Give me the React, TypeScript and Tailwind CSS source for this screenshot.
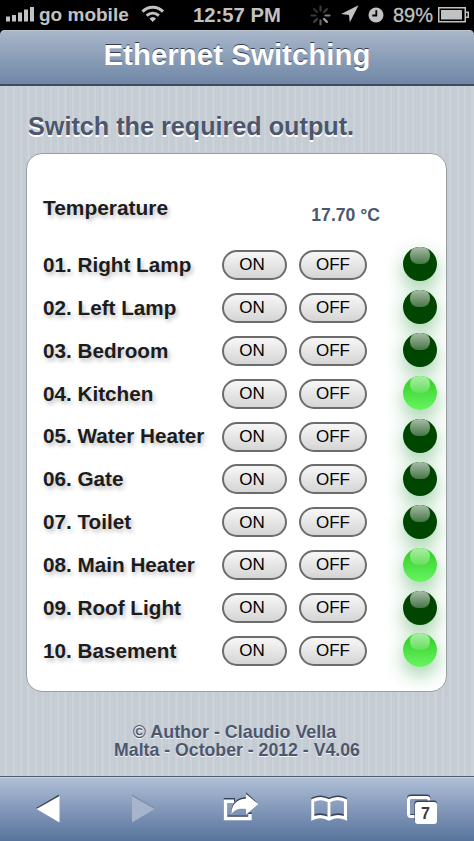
import React from 'react';

interface Output {
  name: string;
  on: boolean;
}

const OUTPUTS: Output[] = [
  { name: '01. Right Lamp', on: false },
  { name: '02. Left Lamp', on: false },
  { name: '03. Bedroom', on: false },
  { name: '04. Kitchen', on: true },
  { name: '05. Water Heater', on: false },
  { name: '06. Gate', on: false },
  { name: '07. Toilet', on: false },
  { name: '08. Main Heater', on: true },
  { name: '09. Roof Light', on: false },
  { name: '10. Basement', on: true },
];

// Opacity of each spoke, clockwise from the top
const SPOKES = [0.3, 0.3, 0.65, 0.85, 0.5, 0.35, 0.3, 0.25];

const StatusBar: React.FC = () => (
  <div className="flex h-[30px] items-center bg-black pl-[6px] text-[20.3px] leading-[30px] font-bold whitespace-nowrap text-[#c2c2c2]">
    <svg className="w-[29px] shrink-0" height="16" viewBox="0 0 29 16" fill="#c2c2c2">
      <rect x="0" y="9.5" width="4" height="5" />
      <rect x="6" y="8" width="4" height="6.5" />
      <rect x="12" y="5.5" width="4" height="9" />
      <rect x="18" y="2.5" width="4" height="12" />
      <rect x="24" y="0" width="4" height="14.5" />
    </svg>
    <span className="ml-[4px] w-[102px] text-[19px]">go mobile</span>
    <svg className="mt-[-2px] w-[24px] shrink-0" height="18" viewBox="0 0 24 18" fill="none" stroke="#c2c2c2" strokeWidth="3">
      <path d="M1.5 6.6 C7 .8 16.5 .8 22 6.6" />
      <path d="M5.6 10.7 C9.3 7.3 14.2 7.3 17.9 10.7" />
      <path d="M8.4 13.4 Q11.75 10.4 15.1 13.4 L11.75 17 Z" fill="#c2c2c2" stroke="none" />
    </svg>
    <span className="ml-[28px] w-[117px]">12:57 PM</span>
    <svg className="w-[21px] shrink-0" height="21" viewBox="0 0 21 21" stroke="#c2c2c2" strokeWidth="2.2" strokeLinecap="round">
      {SPOKES.map((opacity, i) => (
        <line key={i} x1="10.5" y1="1.5" x2="10.5" y2="5.5" opacity={opacity} transform={`rotate(${i * 45} 10.5 10.5)`} />
      ))}
    </svg>
    <svg className="mt-[-2px] ml-[10px] w-[18px] shrink-0" height="18" viewBox="0 0 18 18" fill="#c2c2c2">
      <path d="M17.5 .3 L0 9 L8 10 L8.8 17.5 Z" />
    </svg>
    <svg className="mt-[-1px] ml-[9px] w-[16px] shrink-0" height="16" viewBox="0 0 16 16">
      <circle cx="8" cy="8" r="7.5" fill="#c2c2c2" />
      <path d="M8.3 3.2 V8.5 H4.3" fill="none" stroke="#000" strokeWidth="1.8" />
    </svg>
    <span className="ml-[9px] w-[45px] text-[20px] font-normal [-webkit-text-stroke:0.3px]">89%</span>
    <svg className="w-[32px] shrink-0" height="16" viewBox="0 0 32 16" fill="#c2c2c2">
      <rect x=".75" y=".75" width="26.5" height="14" fill="none" stroke="#c2c2c2" strokeWidth="1.5" />
      <rect x="3" y="3" width="21" height="9.5" />
      <path d="M28 4.5 H31 V11 H28 V9.5 H29.5 V6 H28 Z" />
    </svg>
  </div>
);

const PillButton: React.FC<{ label: string; className: string }> = ({ label, className }) => (
  <button
    className={`mt-px flex h-[30px] items-center justify-center rounded-full border-2 border-[#6c6c6c] bg-linear-to-b from-[#f7f7f7] to-[#d5d5d5] text-[17px] text-black ${className}`}
  >
    {label}
  </button>
);

const Led: React.FC<{ on: boolean }> = ({ on }) => (
  <span
    className={`ml-[36px] flex size-[34px] justify-center overflow-hidden rounded-full shadow-[0_8px_19px_rgba(40,150,60,0.46)] ${
      on ? 'bg-linear-to-b from-[#36d52b] from-20% to-[#68f461]' : 'bg-[#004600]'
    }`}
  >
    <span
      className={`h-[17px] w-[20px] rounded-[8px] bg-linear-to-b ${
        on ? 'from-[#a9eda4] to-[#63e05a]' : 'from-[#a9bda8] to-[#477647]'
      }`}
    />
  </span>
);

const OutputRow: React.FC<{ output: Output }> = ({ output }) => (
  <div className="flex h-[42.9px] items-center">
    <span className="w-[179px] text-[20.7px] font-bold whitespace-nowrap text-[#1c1c1c] [text-shadow:2px_3px_4px_rgba(0,0,0,0.26)]">
      {output.name}
    </span>
    <PillButton label="ON" className="w-[65px] pr-[5px]" />
    <PillButton label="OFF" className="ml-[12px] w-[68px]" />
    <Led on={output.on} />
  </div>
);

const Toolbar: React.FC = () => (
  <div className="h-[65px] border-t border-[#4e5c70] bg-linear-to-b from-[#b0c0d7] to-[#58739c] shadow-[inset_0_1px_#c5d1e0]">
    <svg width="474" height="64" viewBox="0 777 474 64">
      <path d="M59 794.5 L36 808 L59 821 Z" fill="#35425a" />
      <path d="M59.5 796 L36.5 809 L59.5 822.5 Z" fill="#fff" />
      <path d="M132 794.5 L154.5 808 L132 821 Z" fill="#788ba9" />
      <path d="M132 796 L154.5 809 L132 822.5 Z" fill="#a7b5cc" />

      {/* share */}
      <g fill="none" strokeWidth="3.5">
        <path d="M235 799.7 H225.5 V817.3 H250 V812.5" stroke="#35425a" />
        <path d="M234 801.2 H225.5 V818.5 H250 V814" stroke="#fff" />
      </g>
      <path d="M246 792.3 L257.5 803 L246 813 V807.5 C239 807 235 808 231.5 813 C231 803 237 797.5 246 797 Z" fill="#35425a" />
      <path d="M246 794 L258.3 804 L246 814.5 V809 C239 808 235 809 231.5 814 C231 805 237 799 246 798.5 Z" fill="#fff" />

      {/* bookmarks */}
      <g fill="none" strokeWidth="3.2" strokeLinejoin="miter">
        <path d="M312.8 816.5 V799 Q321 795 329 799.5 Q337 795 345.4 799 V816.5 Q337 813 329 817.5 Q321 813 312.8 816.5 Z M329 799.5 V817" stroke="#35425a" />
        <path d="M312.8 818.2 V800.5 Q321 796.5 329 801 Q337 796.5 345.4 800.5 V818.2 Q337 814.5 329 819 Q321 814.5 312.8 818.2 Z M329 801 V819" stroke="#fff" />
      </g>

      {/* open pages */}
      <rect x="408.5" y="796" width="20.5" height="19.5" rx="2.5" fill="#8999b8" stroke="#35425a" strokeWidth="3" />
      <rect x="408.5" y="797.5" width="20.5" height="19" rx="2.5" fill="none" stroke="#fff" strokeWidth="3" />
      <rect x="414.5" y="800.5" width="22.5" height="22" rx="3" fill="#35425a" />
      <rect x="415" y="802" width="22" height="22" rx="3" fill="#fff" />
      <text x="425.5" y="819" textAnchor="middle" fontSize="16" fontWeight="700" fill="#3b3b3f">7</text>
    </svg>
  </div>
);

const App: React.FC = () => {
  return (
    <main className="flex h-[841px] w-[474px] flex-col overflow-hidden bg-black font-['Liberation_Sans',Arial,sans-serif]">
      <StatusBar />
      <header className="h-[56px] rounded-t-[5px] border-b-2 border-[#3d4c63] bg-linear-to-b from-[#aab7ca] to-[#6f87a6] text-center text-[29.5px] leading-[50px] font-bold whitespace-nowrap text-white shadow-[inset_0_1px_#bac5d3] [text-shadow:0_-1.5px_#333d4b]">
        Ethernet Switching
      </header>

      <section className="h-[690px] bg-[repeating-linear-gradient(90deg,#c5ccd4_0px,#c5ccd4_5.2px,#cbd2d8_5.2px,#cbd2d8_7.4px)] px-[26px]">
        <h2 className="h-[67px] pt-[23px] pl-[2px] text-[25.2px] leading-[34px] font-bold whitespace-nowrap text-[#4c566c] [text-shadow:0_1.5px_#fff]">
          Switch the required output.
        </h2>
        <div className="h-[539px] w-[421px] overflow-hidden rounded-[16px] border border-[#9a9fa3] bg-white pl-[16px]">
          <div className="flex h-[89px] items-end justify-between pr-[66px] font-bold whitespace-nowrap">
            <span className="mb-[23px] text-[20.9px] leading-[24px] text-[#1c1c1c] [text-shadow:2px_3px_4px_rgba(0,0,0,0.26)]">
              Temperature
            </span>
            <span className="mb-[17px] text-[17.6px] leading-[22px] text-[#4c566c]">17.70 °C</span>
          </div>
          {OUTPUTS.map((output) => (
            <OutputRow key={output.name} output={output} />
          ))}
        </div>
        <footer className="pt-[31px] text-center text-[17.7px] leading-[18px] font-bold whitespace-nowrap text-[#4c566c] [text-shadow:0_1px_#f0f4f8]">
          <p className="pr-[5px] text-[17.9px]">© Author - Claudio Vella</p>
          <p>Malta - October - 2012 - V4.06</p>
        </footer>
      </section>

      <Toolbar />
    </main>
  );
};

export default App;
